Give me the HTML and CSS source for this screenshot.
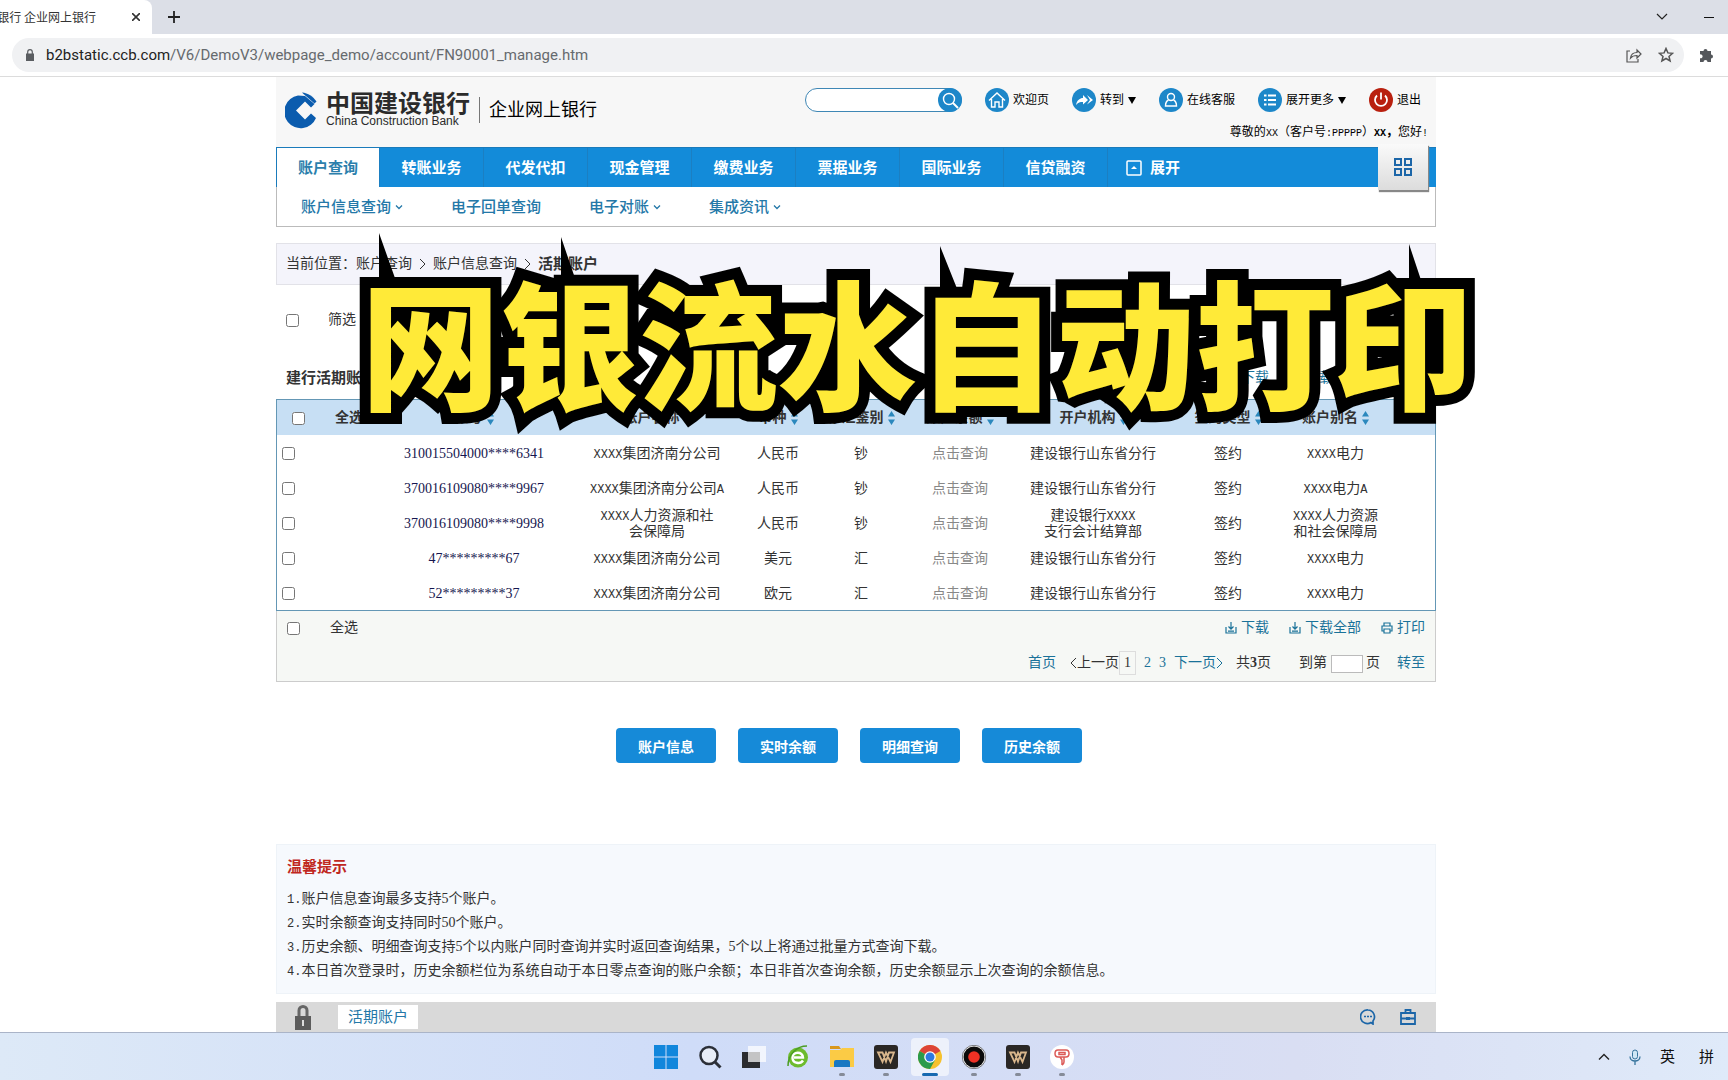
FILE: index.html
```html
<!DOCTYPE html>
<html lang="zh-CN">
<head>
    <meta charset="UTF-8">
    <meta name="viewport" content="width=device-width, initial-scale=1.0">
    <title>中国建设银行 企业网上银行</title>
    <link rel="stylesheet" href="styles.css">
</head>
<body>
    <!-- icons used more than once -->
    <svg class="sprite" width="0" height="0">
        <symbol id="i-sort" viewBox="0 0 7 14"><path d="M3.500 0L7 5.500H0zM3.500 14L0 8.500h7z" fill="#2b88bd"/></symbol>
        <symbol id="i-down" viewBox="0 0 8 8"><path d="M1 2.500l3 3 3-3" fill="none" stroke="currentColor" stroke-width="1.300"/></symbol>
        <symbol id="i-right" viewBox="0 0 7 12"><path d="M1 1l5 5-5 5" fill="none" stroke="currentColor"/></symbol>
        <symbol id="i-left" viewBox="0 0 7 12"><path d="M6 1L1 6l5 5" fill="none" stroke="currentColor"/></symbol>
        <symbol id="i-load" viewBox="0 0 12 12"><path d="M1 5v6h10V5M6 0v7M3.500 4.500L6 7.200l2.500-2.700M3 9.200h6" fill="none" stroke="currentColor" stroke-width="1.200"/></symbol>
        <symbol id="i-print" viewBox="0 0 12 12"><path d="M3 4V1h6v3M3 9H1V4h10v5H9M3 7h6v4H3z" fill="none" stroke="currentColor" stroke-width="1.200"/></symbol>
        <symbol id="i-wps" viewBox="0 0 24 24"><rect width="24" height="24" rx="3" fill="#2a2725"/><path d="M4 7.500h4.500l3.500 9 3-9h5L16.500 17 12 7.500 8.500 17z" fill="none" stroke="#d9b68c" stroke-width="1.800"/></symbol>
    </svg>

    <div class="tabstrip">
        <div class="tab">
            <span class="tab-title">银行 企业网上银行</span>
            <button class="plain" aria-label="关闭"><svg width="8" height="8" viewBox="0 0 8 8"><path d="M0 0l8 8M8 0L0 8" stroke="#333" stroke-width="1.600"/></svg></button>
        </div>
        <button class="plain new-tab" aria-label="新标签页"><svg width="12" height="12" viewBox="0 0 12 12"><path d="M6 0v12M0 6h12" stroke="#222" stroke-width="1.800"/></svg></button>
        <div class="win-controls">
            <svg width="12" height="8" viewBox="0 0 12 8"><path d="M1 1l5 5 5-5" fill="none" stroke="#222" stroke-width="1.200"/></svg>
            <svg width="10" height="8" viewBox="0 0 10 8"><path d="M0 4.500h10" stroke="#111"/></svg>
        </div>
    </div>
    <div class="toolbar">
        <div class="omnibox">
            <svg width="8" height="12" viewBox="0 0 8 12"><path d="M0 4.500h8V12H0z" fill="#5a5d61"/><path d="M1.700 5V3a2.300 2.300 0 014.600 0v2" fill="none" stroke="#5a5d61" stroke-width="1.200"/></svg>
            <span class="url"><b>b2bstatic.ccb.com</b>/V6/DemoV3/webpage_demo/account/FN90001_manage.htm</span>
            <svg width="16" height="16" viewBox="0 0 16 16"><path d="M4 4H1v11h11v-3M4.500 11c.5-4 3-5.500 6.500-5.500V3l4 4-4 4V8.500c-3 0-5 .7-6.500 2.500z" fill="none" stroke="#555" stroke-width="1.200"/></svg>
            <svg width="16" height="16" viewBox="0 0 16 16"><path d="M8 1.500l1.900 4.400 4.700.4-3.600 3.100 1.100 4.600L8 11.500 3.900 14 5 9.400 1.400 6.300l4.700-.4z" fill="none" stroke="#555" stroke-width="1.500"/></svg>
        </div>
        <svg width="16" height="16" viewBox="0 0 16 16"><path d="M2 4h3.500a2 2 0 114 0H13v3.500a2 2 0 110 4V15H9.500a2 2 0 10-4 0H2v-3.800a2 2 0 100-3.800z" fill="#54575b"/></svg>
    </div>

    <main>
        <div class="container">
            <header>
                <div class="logo">
                    <svg width="32" height="37" viewBox="0 0 32 37"><path d="M13 3.500A16.500 16.500 0 1031 26l-5-4.500-6 6L11 18.500l9-9 6 6 3.500-3.500L20 4z" fill="#0b5cae"/><path d="M17 .5c6 .5 11 4 14.500 9L29.500 11.500 18.500 2z" fill="#0b5cae"/></svg>
                    <div class="logo-text">
                        <strong>中国建设银行</strong>
                        <span>China Construction Bank</span>
                    </div>
                    <span class="site-name">企业网上银行</span>
                </div>
                <div class="header-right">
                    <div class="tools">
                        <form class="search">
                            <input type="text" aria-label="搜索">
                            <button type="button" class="disc" aria-label="搜索"><svg width="24" height="24" viewBox="0 0 24 24"><circle cx="11" cy="11" r="5.500"/><path d="M15 15l5 5" stroke-width="2"/></svg></button>
                        </form>
                        <a href="#"><svg class="disc" width="24" height="24" viewBox="0 0 24 24"><path d="M4 12.500L12 5l8 7.500M6.500 11v8H10v-5h4v5h3.500v-8"/></svg>欢迎页</a>
                        <a href="#"><svg class="disc" width="24" height="24" viewBox="0 0 24 24"><path d="M4 17c1-5 4-7 7-7V7l5 5-5 4.500V14c-3 0-5 .5-7 3zM15 7l6 5-6 4.500 3-4.500z" fill="#fff" stroke="none"/></svg>转到<i class="caret"></i></a>
                        <a href="#"><svg class="disc" width="24" height="24" viewBox="0 0 24 24"><circle cx="12" cy="9" r="3.500"/><path d="M9.500 12c-2 1-3 3-3 6h11c0-3-1-5-3-6"/></svg>在线客服</a>
                        <a href="#"><svg class="disc" width="24" height="24" viewBox="0 0 24 24"><path d="M6 7.500h2.500M10 7.500h8M6 12h2.500M10 12h8M6 16.500h2.500M10 16.500h8" stroke-width="2.200"/></svg>展开更多<i class="caret"></i></a>
                        <a href="#"><svg class="disc red" width="24" height="24" viewBox="0 0 24 24"><path d="M8 7.500a6 6 0 108 0M12 4.500v7" stroke-width="1.800"/></svg>退出</a>
                    </div>
                    <p class="greeting">尊敬的<span class="en">XX</span>（客户号<span class="en">:PPPPP</span>）<b><span class="en">XX</span>，</b>您好<span class="en">!</span></p>
                </div>
            </header>

            <nav class="main-nav">
                <a href="#" class="active">账户查询</a>
                <a href="#">转账业务</a>
                <a href="#">代发代扣</a>
                <a href="#">现金管理</a>
                <a href="#">缴费业务</a>
                <a href="#">票据业务</a>
                <a href="#">国际业务</a>
                <a href="#">信贷融资</a>
                <a href="#"><svg width="16" height="16" viewBox="0 0 16 16"><rect x="1" y="1" width="14" height="14" rx="1" fill="none" stroke="#fff" stroke-width="1.500"/><path d="M8 6l3 3H5z" fill="#fff"/></svg>展开</a>
                <button class="grid-btn" aria-label="菜单"><svg width="18" height="18" viewBox="0 0 18 18"><path d="M1 1h6v6H1zM11 1h6v6h-6zM1 11h6v6H1zM11 11h6v6h-6z" fill="none" stroke="#1c66a8" stroke-width="2"/></svg></button>
            </nav>
            <nav class="sub-nav">
                <a href="#">账户信息查询<svg width="8" height="8"><use href="#i-down"/></svg></a>
                <a href="#">电子回单查询</a>
                <a href="#">电子对账<svg width="8" height="8"><use href="#i-down"/></svg></a>
                <a href="#">集成资讯<svg width="8" height="8"><use href="#i-down"/></svg></a>
            </nav>

            <div class="breadcrumb">
                当前位置：账户查询
                <svg width="7" height="12"><use href="#i-right"/></svg>
                账户信息查询
                <svg width="7" height="12"><use href="#i-right"/></svg>
                <b>活期账户</b>
            </div>

            <div class="filter">
                <input type="checkbox" id="filter"><label for="filter">筛选</label>
            </div>

            <div class="list-title">
                <h2>建行活期账户</h2>
                <div class="actions">
                    <a href="#"><svg width="12" height="12"><use href="#i-load"/></svg>下载</a>
                    <a href="#"><svg width="12" height="12"><use href="#i-load"/></svg>下载全部</a>
                    <a href="#"><svg width="12" height="12"><use href="#i-print"/></svg>打印</a>
                </div>
            </div>

            <table>
                <colgroup>
                    <col class="c-check"><col class="c-no"><col class="c-name"><col class="c-cur"><col class="c-type"><col class="c-bal"><col class="c-bank"><col class="c-sign"><col class="c-alias"><col>
                </colgroup>
                <thead>
                    <tr>
                        <th class="all"><input type="checkbox" id="all-top"><label for="all-top">全选</label></th>
                        <th>账号<svg width="7" height="14"><use href="#i-sort"/></svg></th>
                        <th>账户名称<svg width="7" height="14"><use href="#i-sort"/></svg></th>
                        <th>币种<svg width="7" height="14"><use href="#i-sort"/></svg></th>
                        <th>钞汇鉴别<svg width="7" height="14"><use href="#i-sort"/></svg></th>
                        <th>账户余额<svg width="7" height="14"><use href="#i-sort"/></svg></th>
                        <th>开户机构<svg width="7" height="14"><use href="#i-sort"/></svg></th>
                        <th>签约类型<svg width="7" height="14"><use href="#i-sort"/></svg></th>
                        <th>账户别名<svg width="7" height="14"><use href="#i-sort"/></svg></th>
                        <th></th>
                    </tr>
                </thead>
                <tbody>
                    <tr>
                        <td><input type="checkbox" aria-label="选择"></td>
                        <td class="no">310015504000****6341</td>
                        <td><span class="en">XXXX</span>集团济南分公司</td>
                        <td>人民币</td><td>钞</td>
                        <td><a href="#">点击查询</a></td>
                        <td>建设银行山东省分行</td><td>签约</td>
                        <td><span class="en">XXXX</span>电力</td><td></td>
                    </tr>
                    <tr>
                        <td><input type="checkbox" aria-label="选择"></td>
                        <td class="no">370016109080****9967</td>
                        <td><span class="en">XXXX</span>集团济南分公司<span class="en">A</span></td>
                        <td>人民币</td><td>钞</td>
                        <td><a href="#">点击查询</a></td>
                        <td>建设银行山东省分行</td><td>签约</td>
                        <td><span class="en">XXXX</span>电力<span class="en">A</span></td><td></td>
                    </tr>
                    <tr>
                        <td><input type="checkbox" aria-label="选择"></td>
                        <td class="no">370016109080****9998</td>
                        <td><span class="en">XXXX</span>人力资源和社<br>会保障局</td>
                        <td>人民币</td><td>钞</td>
                        <td><a href="#">点击查询</a></td>
                        <td>建设银行<span class="en">XXXX</span><br>支行会计结算部</td><td>签约</td>
                        <td><span class="en">XXXX</span>人力资源<br>和社会保障局</td><td></td>
                    </tr>
                    <tr>
                        <td><input type="checkbox" aria-label="选择"></td>
                        <td class="no">47*********67</td>
                        <td><span class="en">XXXX</span>集团济南分公司</td>
                        <td>美元</td><td>汇</td>
                        <td><a href="#">点击查询</a></td>
                        <td>建设银行山东省分行</td><td>签约</td>
                        <td><span class="en">XXXX</span>电力</td><td></td>
                    </tr>
                    <tr>
                        <td><input type="checkbox" aria-label="选择"></td>
                        <td class="no">52*********37</td>
                        <td><span class="en">XXXX</span>集团济南分公司</td>
                        <td>欧元</td><td>汇</td>
                        <td><a href="#">点击查询</a></td>
                        <td>建设银行山东省分行</td><td>签约</td>
                        <td><span class="en">XXXX</span>电力</td><td></td>
                    </tr>
                </tbody>
            </table>

            <div class="table-foot">
                <div class="foot-row">
                    <div class="foot-all"><input type="checkbox" id="all-bottom"><label for="all-bottom">全选</label></div>
                    <div class="actions">
                        <a href="#"><svg width="12" height="12"><use href="#i-load"/></svg>下载</a>
                        <a href="#"><svg width="12" height="12"><use href="#i-load"/></svg>下载全部</a>
                        <a href="#"><svg width="12" height="12"><use href="#i-print"/></svg>打印</a>
                    </div>
                </div>
                <div class="pager">
                    <a href="#">首页</a>
                    <span class="prev"><svg width="7" height="12"><use href="#i-left"/></svg>上一页<span class="current">1</span></span>
                    <a href="#">2</a>
                    <a href="#">3</a>
                    <a href="#">下一页<svg width="7" height="12"><use href="#i-right"/></svg></a>
                    <span class="total">共<b>3</b>页</span>
                    <label class="goto">到第<input type="text">页</label>
                    <a href="#" class="jump">转至</a>
                </div>
            </div>

            <div class="buttons">
                <button>账户信息</button>
                <button>实时余额</button>
                <button>明细查询</button>
                <button>历史余额</button>
            </div>

            <section class="tips">
                <h3>温馨提示</h3>
                <p><span class="en">1.</span>账户信息查询最多支持5个账户。</p>
                <p><span class="en">2.</span>实时余额查询支持同时50个账户。</p>
                <p><span class="en">3.</span>历史余额、明细查询支持5个以内账户同时查询并实时返回查询结果，5个以上将通过批量方式查询下载。</p>
                <p><span class="en">4.</span>本日首次登录时，历史余额栏位为系统自动于本日零点查询的账户余额；本日非首次查询余额，历史余额显示上次查询的余额信息。</p>
            </section>

            <footer>
                <svg width="16" height="25" viewBox="0 0 16 25"><path d="M4 12V5.500a4 4 0 018 0V12" fill="none" stroke="#666" stroke-width="3"/><path d="M0 11h16v14H0z" fill="#5c5c5c"/><path d="M7 15h2v6H7z" fill="#ddd"/></svg>
                <a href="#" class="open-tab">活期账户</a>
                <svg class="push" width="16" height="16" viewBox="0 0 16 16"><path d="M13 15l-2-1.500A6.800 6.800 0 118 1a6.800 6.800 0 015 11z" fill="none" stroke="#1c66a8" stroke-width="1.700"/><path d="M4 7.500h2M7 7.500h2M10 7.500h2" stroke="#1c66a8" stroke-width="1.500"/></svg>
                <svg width="16" height="16" viewBox="0 0 16 16"><path d="M1 4h14v11H1zM5.500 4V1h5v3M1 9.500h14" fill="none" stroke="#1c66a8" stroke-width="1.800"/><path d="M6 8h4v3H6z" fill="#1c66a8"/></svg>
            </footer>

            <!-- video caption laid over the page -->
            <svg class="caption" width="1140" height="220" viewBox="0 0 1140 220">
                <path d="M33 13v62h22zM215 17v50h17zM594 26v50h20zM1063 24v54h18z"/>
                <text x="15" y="179">网银流水自动打印</text>
            </svg>
        </div>
    </main>

    <div class="taskbar">
        <div class="apps">
            <button><svg width="24" height="24" viewBox="0 0 24 24"><path d="M0 0h11.500v11.500H0zM12.500 0H24v11.500H12.500zM0 12.500h11.500V24H0zM12.500 12.500H24V24H12.500z" fill="#1186dc"/></svg></button>
            <button><svg width="24" height="24" viewBox="0 0 24 24"><circle cx="11" cy="10.500" r="8.500" fill="#e8edf7" stroke="#2b2f38" stroke-width="2.500"/><path d="M17 17l5.500 5.500" stroke="#2b2f38" stroke-width="3"/></svg></button>
            <button><svg width="24" height="24" viewBox="0 0 24 24"><path d="M0 7h18v16H0z" fill="#2b2c2f"/><path d="M6 1h18v16H6z" fill="#fff" fill-opacity=".72"/></svg></button>
            <button><svg width="24" height="24" viewBox="0 0 24 24"><circle cx="12" cy="12.500" r="10" fill="#6dbb2e"/><path d="M17 15.500c-2.500 4-10.500 3-10.500-2.800 0-6.500 10.500-6.500 10.500-.2H8" fill="none" stroke="#fff" stroke-width="2.400"/><path d="M2 21C2 9 11 1 21 1" fill="none" stroke="#4c9d25" stroke-width="1.500"/></svg></button>
            <button class="running"><svg width="24" height="24" viewBox="0 0 24 24"><path d="M0 1h9l2 3H0z" fill="#d9971c"/><path d="M0 5h10l2-2h12v19H0z" fill="#fbcb45"/><path d="M4 22v-5q0-2 2-2h12q2 0 2 2v5z" fill="#1a78c2"/></svg></button>
            <button class="running"><svg width="24" height="24"><use href="#i-wps"/></svg></button>
            <button class="running current-app"><svg width="24" height="24" viewBox="0 0 24 24"><circle cx="12" cy="12" r="12" fill="#f6c12d"/><path d="M12 12L1.600 6A12 12 0 0122.400 6z" fill="#dd4437"/><path d="M1.600 6A12 12 0 0012 24l5-9-5-3z" fill="#2c9a4b"/><circle cx="12" cy="12" r="5.800" fill="#fff"/><circle cx="12" cy="12" r="4.500" fill="#2f79e0"/></svg></button>
            <button class="running"><svg width="24" height="24" viewBox="0 0 24 24"><circle cx="12" cy="12" r="11.700" fill="#fff" stroke="#222" stroke-width=".6"/><circle cx="12" cy="12" r="10.500" fill="#0b0b0b"/><circle cx="12" cy="12" r="5.800" fill="#ee3124"/></svg></button>
            <button class="running"><svg width="24" height="24"><use href="#i-wps"/></svg></button>
            <button class="running"><svg width="24" height="24" viewBox="0 0 24 24"><circle cx="12" cy="12" r="12" fill="#fff"/><path d="M8 5h8q3 0 3 3.500t-3 3.500H8q-3 0-3-3.500T8 5zM9 7.500h6v2H9zM10 12l2 3v5M14 12v5q0 2-2 3" fill="none" stroke="#dc5a57" stroke-width="1.500"/></svg></button>
        </div>
        <div class="tray">
            <svg width="12" height="8" viewBox="0 0 12 8"><path d="M1 6.500l5-5 5 5" fill="none" stroke="#222" stroke-width="1.400"/></svg>
            <svg width="12" height="16" viewBox="0 0 12 16"><rect x="3.500" y="1" width="5" height="9" rx="2.500" fill="#cfe6f5" stroke="#35739c"/><path d="M1 7.500c0 6 10 6 10 0M6 12v4" fill="none" stroke="#35739c" stroke-width="1.300"/></svg>
            <span>英</span>
            <span class="ime">拼</span>
        </div>
    </div>
</body>
</html>
```
FILE: styles.css
```css
* {
    box-sizing: border-box;
}
body {
    display: flex;
    flex-direction: column;
    height: 100vh;
    margin: 0;
    overflow: hidden;
    background-color: #fff;
    color: #333;
    font-family: "Liberation Serif", "Noto Sans CJK SC", serif;
    font-size: 14px;
    line-height: 16px;
}
a {
    color: #1a7299;
    text-decoration: none;
}
h2, h3, p {
    margin: 0;
}
svg {
    flex: none;
}
button {
    padding: 0;
    border: none;
    background: none;
    font-family: inherit;
}
input[type="checkbox"] {
    width: 13px;
    height: 13px;
    margin: 0;
}
.sprite {
    position: absolute;
}
.en {
    font-family: "Liberation Mono", monospace;
    font-size: 12px;
    line-height: 12px;
}
.plain {
    display: flex;
}

/* browser window */
.tabstrip {
    display: flex;
    align-items: center;
    flex: none;
    height: 34px;
    background-color: #dcdfe7;
    font-family: "Noto Sans CJK SC", sans-serif;
    font-size: 12px;
}
.tab {
    display: flex;
    align-items: center;
    justify-content: flex-end;
    gap: 36px;
    width: 152px;
    height: 34px;
    padding-right: 12px;
    overflow: hidden;
    background-color: #fff;
    border-top-right-radius: 8px;
}
.tab-title {
    white-space: nowrap;
}
.new-tab {
    margin-left: 16px;
}
.win-controls {
    display: flex;
    gap: 36px;
    margin-left: auto;
    padding-right: 14px;
}
.toolbar {
    display: flex;
    align-items: center;
    gap: 14px;
    flex: none;
    height: 43px;
    padding: 0 14px 0 12px;
    border-bottom: 1px solid #dcdcdc;
}
.omnibox {
    display: flex;
    align-items: center;
    gap: 16px;
    flex: 1;
    height: 34px;
    padding: 0 10px 0 14px;
    border-radius: 17px;
    background-color: #f0f1f3;
}
.url {
    flex: 1;
    margin-left: -4px;
    color: #666a6e;
    font-family: Roboto, sans-serif;
    font-size: 15px;
}
.url b {
    color: #222;
    font-weight: normal;
}

/* page */
main {
    flex: 1;
    min-height: 0;
    padding-right: 16px;
    overflow: hidden;
}
.container {
    position: relative;
    max-width: 1160px;
    margin: 0 auto;
}
header {
    display: flex;
    justify-content: space-between;
    height: 70px;
    background-color: #f7f7f7;
}
.logo {
    display: flex;
    align-items: center;
    gap: 9px;
    height: 66px;
    padding-left: 9px;
}
.logo-text {
    display: flex;
    flex-direction: column;
    color: #2b2b2b;
}
.logo-text strong {
    font-size: 24px;
    line-height: 22px;
}
.logo-text span {
    font-family: "Liberation Sans", sans-serif;
    font-size: 12px;
    line-height: 12px;
}
.site-name {
    padding-left: 9px;
    border-left: 1px solid #777;
    color: #000;
    font-size: 18px;
    line-height: 26px;
}
.header-right {
    padding: 11px 8px 0 0;
    color: #000;
    font-size: 12px;
}
.tools {
    display: flex;
    align-items: center;
    justify-content: flex-end;
    gap: 23px;
    padding-right: 7px;
}
.tools a {
    display: flex;
    align-items: center;
    gap: 4px;
    color: #000;
}
.search {
    display: flex;
    width: 157px;
    height: 24px;
    border: 1px solid #3f87b5;
    border-radius: 12px;
    background-color: #fff;
}
.search input {
    flex: 1;
    min-width: 0;
    border: none;
    background: none;
}
.disc {
    margin: 0;
    border-radius: 50%;
    background-color: #1d87c9;
    fill: none;
    stroke: #fff;
    stroke-width: 1.4px;
}
.search .disc {
    width: 24px;
    height: 24px;
    margin: -1px;
}
.red {
    background-color: #b9200f;
}
.caret {
    border: 4px solid transparent;
    border-top: 7px solid #000;
    border-bottom: none;
}
.greeting {
    margin-top: 12px;
    text-align: right;
}
.greeting .en {
    font-size: 10px;
}
.main-nav {
    display: flex;
    height: 40px;
    border-top: 1px solid #1a7bbb;
    background-color: #138bd9;
    font-size: 15px;
    font-weight: bold;
}
.main-nav a {
    display: flex;
    align-items: center;
    justify-content: center;
    gap: 8px;
    width: 104px;
    border-right: 1px solid #1b7fc2;
    color: #fff;
}
.main-nav a.active {
    border-left: 1px solid #1a7bbb;
    background-color: #fff;
    color: #2c7fac;
}
.main-nav a:last-of-type {
    width: 90px;
    border: none;
}
.grid-btn {
    display: flex;
    align-items: center;
    justify-content: center;
    width: 50px;
    height: 46px;
    margin: -4px 8px 0 auto;
    background: linear-gradient(#fafafa, #dcdcdc);
    box-shadow: 1px 2px 1px #888;
    z-index: 1;
}
.sub-nav {
    display: flex;
    align-items: center;
    gap: 48px;
    height: 40px;
    padding-left: 24px;
    border: 1px solid #bbb;
    border-top: none;
    font-size: 15px;
    font-weight: 500;
}
.sub-nav a {
    display: flex;
    align-items: center;
    gap: 4px;
    color: #2478a8;
}
.breadcrumb {
    display: flex;
    align-items: center;
    gap: 7px;
    height: 42px;
    margin-top: 16px;
    padding-left: 9px;
    border: 1px solid #e2e2e8;
    background-color: #f4f4fb;
}
.breadcrumb b {
    font-size: 15px;
}
.filter {
    display: flex;
    align-items: center;
    gap: 29px;
    height: 70px;
    padding-left: 10px;
}
.list-title {
    display: flex;
    align-items: center;
    justify-content: space-between;
    height: 44px;
    padding: 2px 11px 0 10px;
}
h2, h3 {
    font-size: 15px;
}
.actions {
    display: flex;
    gap: 20px;
}
.actions a {
    display: flex;
    align-items: center;
    gap: 4px;
}

/* account list */
table {
    width: 100%;
    table-layout: fixed;
    border-collapse: separate;
    border-spacing: 0;
    border: 1px solid #6497b5;
    text-align: center;
}
.c-check { width: 114px; }
.c-no { width: 166px; }
.c-name { width: 200px; }
.c-cur { width: 42px; }
.c-type { width: 124px; }
.c-bal { width: 74px; }
.c-bank { width: 192px; }
.c-sign { width: 78px; }
.c-alias { width: 137px; }
th, td {
    height: 35px;
    padding: 0;
    white-space: nowrap;
}
td {
    padding-top: 2px;
}
th {
    background-color: #c7dff4;
}
th svg {
    margin-left: 4px;
    vertical-align: middle;
}
th.all {
    padding-left: 15px;
    text-align: left;
}
th.all label {
    margin-left: 30px;
}
th.all input {
    vertical-align: middle;
}
td:first-child {
    padding: 0 0 0 5px;
    text-align: left;
}
td input {
    vertical-align: middle;
}
td a {
    color: #888;
}
.no {
    color: #16164f;
}
.table-foot {
    height: 71px;
    padding: 9px 10px 0;
    border: 1px solid #ccc;
    border-top: none;
    background-color: #f6f8f5;
}
.foot-row {
    display: flex;
    justify-content: space-between;
}
.foot-all {
    display: flex;
    align-items: center;
    gap: 30px;
}
.pager {
    display: flex;
    align-items: center;
    justify-content: flex-end;
    gap: 8px;
    height: 24px;
    margin-top: 15px;
}
.pager a, .pager span, .goto {
    display: flex;
    align-items: center;
}
.pager .prev {
    margin-left: 6px;
}
.pager .current {
    justify-content: center;
    width: 17px;
    height: 24px;
    border: 1px solid #ddd;
}
.pager .total {
    margin: 0 20px 0 5px;
}
.goto input {
    width: 32px;
    height: 18px;
    margin: 2px 3px 0 4px;
    border: 1px solid #bbb;
}
.pager .jump {
    margin-left: 9px;
}
.buttons {
    display: flex;
    justify-content: center;
    gap: 22px;
    margin-top: 46px;
    padding-right: 14px;
}
.buttons button {
    width: 100px;
    height: 35px;
    border-radius: 4px;
    background-color: #168ad8;
    color: #fff;
    font-size: 14px;
    font-weight: bold;
}
.tips {
    height: 150px;
    margin-top: 81px;
    padding: 14px 10px 0;
    border: 1px solid #eef3f8;
    background-color: #f6f9fd;
    line-height: 24px;
}
.tips h3 {
    margin-bottom: 12px;
    color: #c0281f;
    line-height: 16px;
}
footer {
    display: flex;
    align-items: center;
    gap: 24px;
    height: 30px;
    margin-top: 8px;
    padding: 0 20px 0 19px;
    background-color: #d9d9d9;
}
.open-tab {
    margin-left: 3px;
    padding: 0 10px;
    background-color: #fff;
    color: #2478a8;
    font-size: 15px;
    line-height: 24px;
}
.push {
    margin-left: auto;
}
.caption {
    position: absolute;
    top: 143px;
    left: 70px;
    font-family: "Noto Sans CJK SC", sans-serif;
    font-size: 139px;
    font-weight: 900;
    pointer-events: none;
    z-index: 2;
}
.caption text {
    fill: #ffea38;
    stroke: #000;
    stroke-width: 22px;
    stroke-miterlimit: 2;
    paint-order: stroke;
}

/* windows taskbar */
.taskbar {
    display: grid;
    grid-template-columns: 1fr auto 1fr;
    align-items: center;
    flex: none;
    height: 48px;
    border-top: 1px solid #aab4c8;
    background: linear-gradient(90deg, #dde9f7, #cfdcf8 40%, #d9def3 75%, #dfeaf9);
}
.apps {
    display: flex;
    grid-column: 2;
}
.apps button {
    display: flex;
    align-items: center;
    justify-content: center;
    position: relative;
    width: 38px;
    height: 38px;
    margin: 0 3px;
    border-radius: 4px;
}
.running::after {
    content: "";
    position: absolute;
    bottom: 0;
    width: 6px;
    height: 3px;
    border-radius: 2px;
    background-color: #858b98;
}
.apps .current-app {
    background-color: #edf1fb;
}
.current-app::after {
    width: 16px;
    background-color: #1668b0;
}
.tray {
    display: flex;
    align-items: center;
    justify-content: flex-end;
    gap: 19px;
    padding-right: 14px;
    color: #111;
    font-size: 15px;
}
.ime {
    margin-left: 5px;
}
```
